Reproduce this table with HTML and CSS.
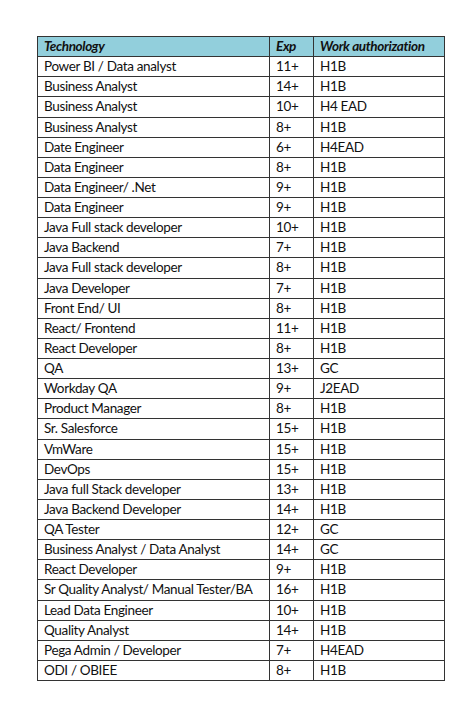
FILE: index.html
```html
<!DOCTYPE html>
<html>
<head>
<meta charset="utf-8">
<link rel="stylesheet" href="styles.css">
</head>
<body>
<div class="page">
<table class="grid">
<thead>
<tr><th class="c1">Technology</th><th class="c2">Exp</th><th class="c3">Work authorization</th></tr>
</thead>
<tbody>
<tr><td>Power BI / Data analyst</td><td>11+</td><td>H1B</td></tr>
<tr><td>Business Analyst</td><td>14+</td><td>H1B</td></tr>
<tr><td>Business Analyst</td><td>10+</td><td>H4 EAD</td></tr>
<tr><td>Business Analyst</td><td>8+</td><td>H1B</td></tr>
<tr><td>Date Engineer</td><td>6+</td><td>H4EAD</td></tr>
<tr><td>Data Engineer</td><td>8+</td><td>H1B</td></tr>
<tr><td>Data Engineer/ .Net</td><td>9+</td><td>H1B</td></tr>
<tr><td>Data Engineer</td><td>9+</td><td>H1B</td></tr>
<tr><td>Java Full stack developer</td><td>10+</td><td>H1B</td></tr>
<tr><td>Java Backend</td><td>7+</td><td>H1B</td></tr>
<tr><td>Java Full stack developer</td><td>8+</td><td>H1B</td></tr>
<tr><td>Java Developer</td><td>7+</td><td>H1B</td></tr>
<tr><td>Front End/ UI</td><td>8+</td><td>H1B</td></tr>
<tr><td>React/ Frontend</td><td>11+</td><td>H1B</td></tr>
<tr><td>React Developer</td><td>8+</td><td>H1B</td></tr>
<tr><td>QA</td><td>13+</td><td>GC</td></tr>
<tr><td>Workday QA</td><td>9+</td><td>J2EAD</td></tr>
<tr><td>Product Manager</td><td>8+</td><td>H1B</td></tr>
<tr><td>Sr. Salesforce</td><td>15+</td><td>H1B</td></tr>
<tr><td>VmWare</td><td>15+</td><td>H1B</td></tr>
<tr><td>DevOps</td><td>15+</td><td>H1B</td></tr>
<tr><td>Java full Stack developer</td><td>13+</td><td>H1B</td></tr>
<tr><td>Java Backend Developer</td><td>14+</td><td>H1B</td></tr>
<tr><td>QA Tester</td><td>12+</td><td>GC</td></tr>
<tr><td>Business Analyst / Data Analyst</td><td>14+</td><td>GC</td></tr>
<tr><td>React Developer</td><td>9+</td><td>H1B</td></tr>
<tr><td>Sr Quality Analyst/ Manual Tester/BA</td><td>16+</td><td>H1B</td></tr>
<tr><td>Lead Data Engineer</td><td>10+</td><td>H1B</td></tr>
<tr><td>Quality Analyst</td><td>14+</td><td>H1B</td></tr>
<tr><td>Pega Admin / Developer</td><td>7+</td><td>H4EAD</td></tr>
<tr><td>ODI / OBIEE</td><td>8+</td><td>H1B</td></tr>
</tbody>
</table>
</div>
</body>
</html>
```

FILE: styles.css
```css
html, body {
  margin: 0;
  padding: 0;
  background: #ffffff;
}

.page {
  padding: 36px 0 0 37px;
}

.grid {
  border-collapse: collapse;
  width: 408px;
  table-layout: fixed;
  font-family: Lato, "Liberation Sans", sans-serif;
  font-size: 13.5px;
  letter-spacing: -0.35px;
  color: #111111;
}

.grid th,
.grid td {
  border: 1px solid #333333;
  height: 19.125px;
  padding: 0 0 0 6px;
  text-align: left;
  vertical-align: middle;
  line-height: 19px;
  white-space: nowrap;
  overflow: hidden;
}

.grid th {
  background: #92cfdc;
  font-weight: bold;
  font-style: italic;
}

.c1 { width: 225px; }
.c2 { width: 37px; }
.c3 { width: auto; }
```
